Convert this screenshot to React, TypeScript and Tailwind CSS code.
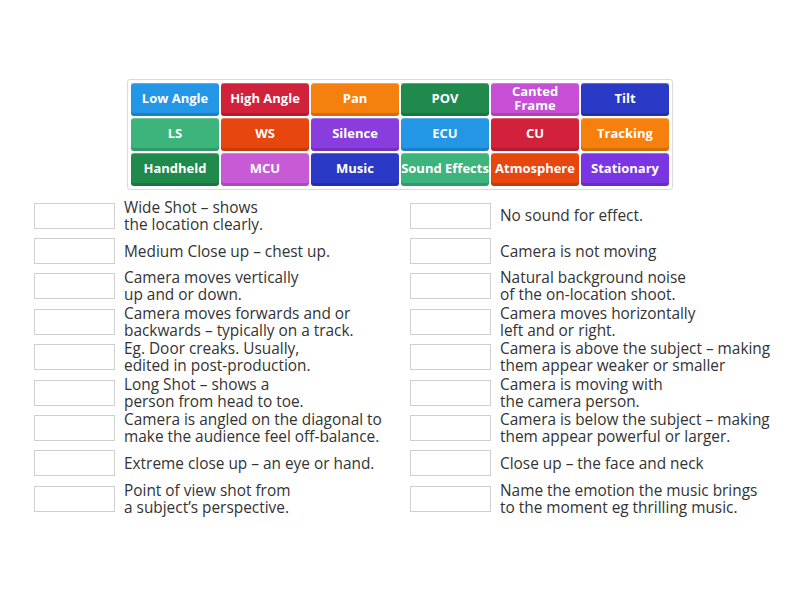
import React from "react";

type Tile = { label: React.ReactNode; bg: string };

const tiles: Tile[] = [
  { label: "Low Angle", bg: "bg-[#2396e6]" },
  { label: "High Angle", bg: "bg-[#d2213a]" },
  { label: "Pan", bg: "bg-[#f6800e]" },
  { label: "POV", bg: "bg-[#1f8a4c]" },
  { label: <>Canted<br />Frame</>, bg: "bg-[#c64fd6]" },
  { label: "Tilt", bg: "bg-[#2a39c6]" },
  { label: "LS", bg: "bg-[#3db47c]" },
  { label: "WS", bg: "bg-[#e8460f]" },
  { label: "Silence", bg: "bg-[#8a3ddf]" },
  { label: "ECU", bg: "bg-[#2396e6]" },
  { label: "CU", bg: "bg-[#d2213a]" },
  { label: "Tracking", bg: "bg-[#f6800e]" },
  { label: "Handheld", bg: "bg-[#1f8a4c]" },
  { label: "MCU", bg: "bg-[#c95ad6]" },
  { label: "Music", bg: "bg-[#2a39c6]" },
  { label: "Sound Effects", bg: "bg-[#3db47c]" },
  { label: "Atmosphere", bg: "bg-[#e8460f]" },
  { label: "Stationary", bg: "bg-[#7b36e4]" },
];

const left: string[][] = [
  ["Wide Shot – shows", "the location clearly."],
  ["Medium Close up – chest up."],
  ["Camera moves vertically", "up and or down."],
  ["Camera moves forwards and or", "backwards – typically on a track."],
  ["Eg. Door creaks. Usually,", "edited in post-production."],
  ["Long Shot – shows a", "person from head to toe."],
  ["Camera is angled on the diagonal to", "make the audience feel off-balance."],
  ["Extreme close up – an eye or hand."],
  ["Point of view shot from", "a subject’s perspective."],
];

const right: string[][] = [
  ["No sound for effect."],
  ["Camera is not moving"],
  ["Natural background noise", "of the on-location shoot."],
  ["Camera moves horizontally", "left and or right."],
  ["Camera is above the subject – making", "them appear weaker or smaller"],
  ["Camera is moving with", "the camera person."],
  ["Camera is below the subject – making", "them appear powerful or larger."],
  ["Close up – the face and neck"],
  ["Name the emotion the music brings", "to the moment eg thrilling music."],
];

function Row({ lines }: { lines: string[] }) {
  return (
    <div className="flex h-[35.4px] items-center">
      <div className="h-[26px] w-[81px] shrink-0 border border-[#cfcfcf] bg-white" />
      <div className="ml-[9px] text-[15.4px] leading-[17px] text-[#333]">
        {lines.map((l, i) => (
          <div key={i} className="whitespace-nowrap">{l}</div>
        ))}
      </div>
    </div>
  );
}

export default function App() {
  return (
    <div
      className="h-[600px] w-[800px] overflow-hidden bg-white"
      style={{ fontFamily: '"Open Sans", sans-serif' }}
    >
      {/* Term bank */}
      <div className="flex justify-center pt-[79px]">
        <div className="grid grid-cols-[repeat(6,88px)] gap-[2px] rounded-[3px] border border-[#dadada] p-[3px]">
          {tiles.map((t, i) => (
            <div
              key={i}
              className={`flex h-[33px] items-center justify-center rounded-[3px] pb-[3px] text-center text-[13px] font-bold leading-[14px] text-white shadow-[inset_0_1px_0_rgba(255,255,255,0.25),inset_0_-3px_0_rgba(0,0,0,0.15)] ${t.bg}`}
            >
              <span className="whitespace-nowrap">{t.label}</span>
            </div>
          ))}
        </div>
      </div>

      {/* Definitions */}
      <div className="ml-[34px] mt-[8px] grid grid-cols-[376px_376px]">
        <div className="flex flex-col">
          {left.map((l, i) => (
            <Row key={i} lines={l} />
          ))}
        </div>
        <div className="flex flex-col">
          {right.map((l, i) => (
            <Row key={i} lines={l} />
          ))}
        </div>
      </div>
    </div>
  );
}
